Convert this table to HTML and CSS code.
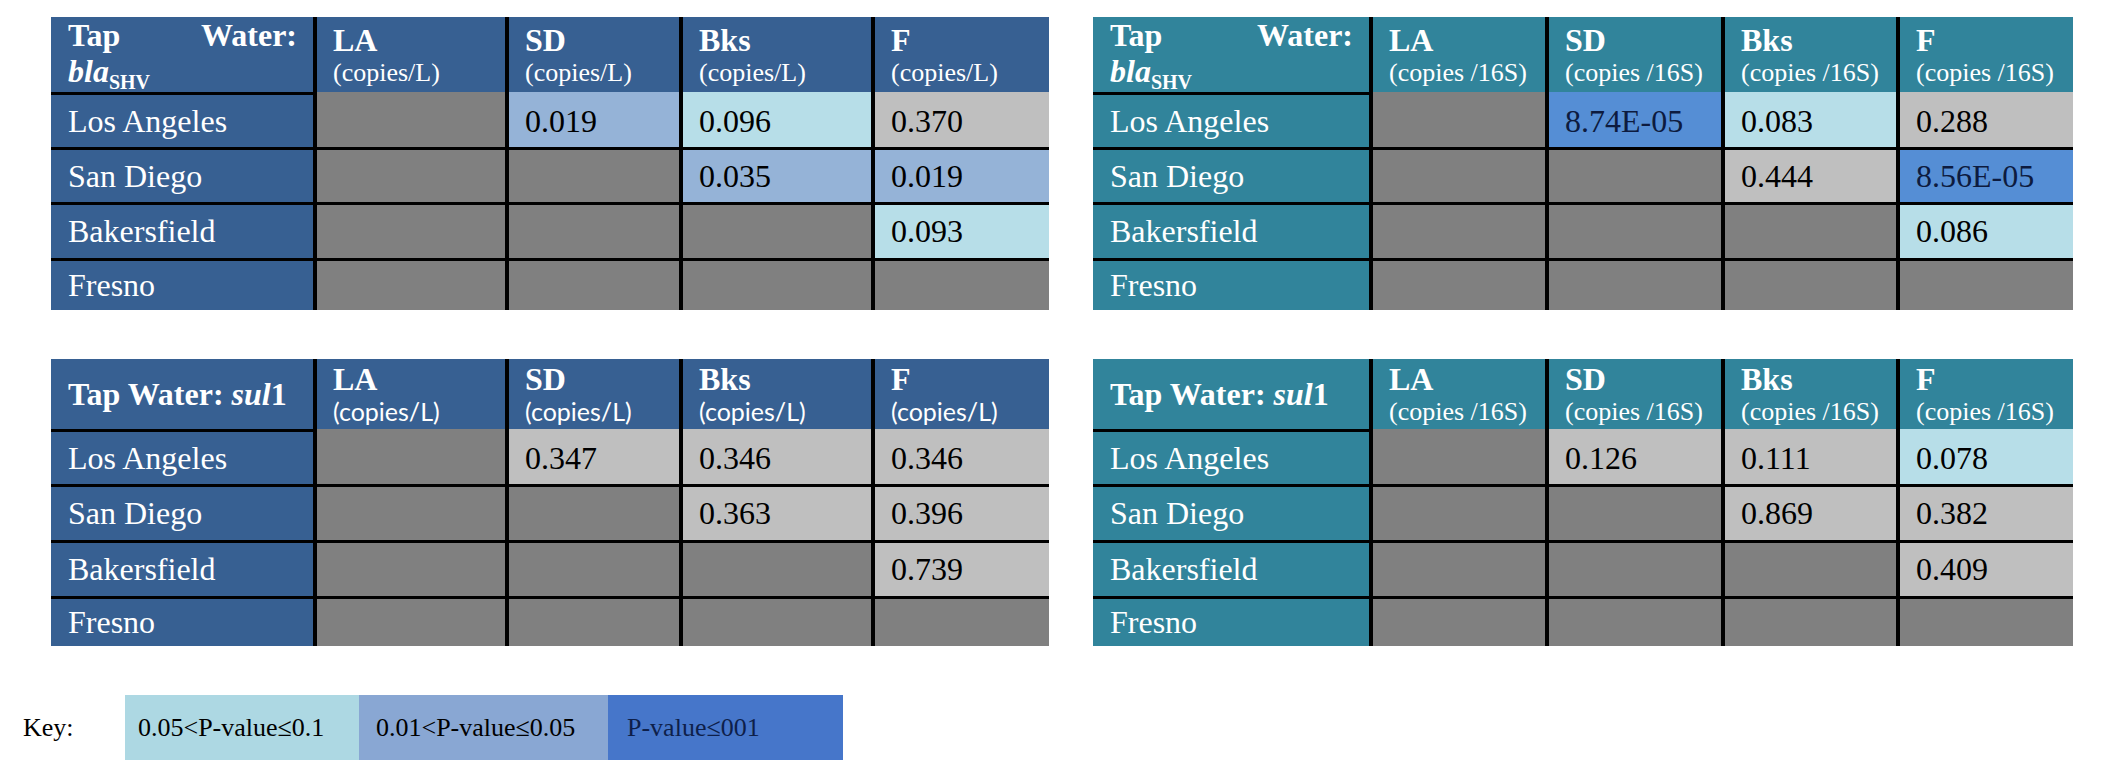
FILE: index.html
```html
<!DOCTYPE html>
<html lang="en">
<head>
<meta charset="utf-8">
<title>Tap water P-value tables</title>
<link rel="stylesheet" href="styles.css">
</head>
<body>
<div class="page">
  <div class="tables">
    <!-- top left -->
    <div class="tbl blue top cols-l">
      <div class="c h first"><div class="hl"><span>Tap</span><span>Water:</span></div><div><i>bla</i><sub>SHV</sub></div></div>
      <div class="c h"><b>LA</b><span class="u">(copies/L)</span></div>
      <div class="c h"><b>SD</b><span class="u">(copies/L)</span></div>
      <div class="c h"><b>Bks</b><span class="u">(copies/L)</span></div>
      <div class="c h"><b>F</b><span class="u">(copies/L)</span></div>
      <div class="c lbl">Los Angeles</div>
      <div class="c d g"></div>
      <div class="c d mb">0.019</div>
      <div class="c d lb">0.096</div>
      <div class="c d lg">0.370</div>
      <div class="c lbl">San Diego</div>
      <div class="c d g"></div>
      <div class="c d g"></div>
      <div class="c d mb">0.035</div>
      <div class="c d mb">0.019</div>
      <div class="c lbl">Bakersfield</div>
      <div class="c d g"></div>
      <div class="c d g"></div>
      <div class="c d g"></div>
      <div class="c d lb">0.093</div>
      <div class="c lbl">Fresno</div>
      <div class="c d g"></div>
      <div class="c d g"></div>
      <div class="c d g"></div>
      <div class="c d g"></div>
    </div>
    <!-- top right -->
    <div class="tbl teal top cols-r">
      <div class="c h first"><div class="hl"><span>Tap</span><span>Water:</span></div><div><i>bla</i><sub>SHV</sub></div></div>
      <div class="c h"><b>LA</b><span class="u">(copies /16S)</span></div>
      <div class="c h"><b>SD</b><span class="u">(copies /16S)</span></div>
      <div class="c h"><b>Bks</b><span class="u">(copies /16S)</span></div>
      <div class="c h"><b>F</b><span class="u">(copies /16S)</span></div>
      <div class="c lbl">Los Angeles</div>
      <div class="c d g"></div>
      <div class="c d sb">8.74E-05</div>
      <div class="c d lb">0.083</div>
      <div class="c d lg">0.288</div>
      <div class="c lbl">San Diego</div>
      <div class="c d g"></div>
      <div class="c d g"></div>
      <div class="c d lg">0.444</div>
      <div class="c d sb">8.56E-05</div>
      <div class="c lbl">Bakersfield</div>
      <div class="c d g"></div>
      <div class="c d g"></div>
      <div class="c d g"></div>
      <div class="c d lb">0.086</div>
      <div class="c lbl">Fresno</div>
      <div class="c d g"></div>
      <div class="c d g"></div>
      <div class="c d g"></div>
      <div class="c d g"></div>
    </div>
    <!-- bottom left -->
    <div class="tbl blue bottom cols-l">
      <div class="c h first"><span>Tap Water: <i>sul</i>1</span></div>
      <div class="c h"><b>LA</b><span class="u sans">(copies/L)</span></div>
      <div class="c h"><b>SD</b><span class="u sans">(copies/L)</span></div>
      <div class="c h"><b>Bks</b><span class="u sans">(copies/L)</span></div>
      <div class="c h"><b>F</b><span class="u sans">(copies/L)</span></div>
      <div class="c lbl">Los Angeles</div>
      <div class="c d g"></div>
      <div class="c d lg">0.347</div>
      <div class="c d lg">0.346</div>
      <div class="c d lg">0.346</div>
      <div class="c lbl">San Diego</div>
      <div class="c d g"></div>
      <div class="c d g"></div>
      <div class="c d lg">0.363</div>
      <div class="c d lg">0.396</div>
      <div class="c lbl">Bakersfield</div>
      <div class="c d g"></div>
      <div class="c d g"></div>
      <div class="c d g"></div>
      <div class="c d lg">0.739</div>
      <div class="c lbl">Fresno</div>
      <div class="c d g"></div>
      <div class="c d g"></div>
      <div class="c d g"></div>
      <div class="c d g"></div>
    </div>
    <!-- bottom right -->
    <div class="tbl teal bottom cols-r">
      <div class="c h first"><span>Tap Water: <i>sul</i>1</span></div>
      <div class="c h"><b>LA</b><span class="u">(copies /16S)</span></div>
      <div class="c h"><b>SD</b><span class="u">(copies /16S)</span></div>
      <div class="c h"><b>Bks</b><span class="u">(copies /16S)</span></div>
      <div class="c h"><b>F</b><span class="u">(copies /16S)</span></div>
      <div class="c lbl">Los Angeles</div>
      <div class="c d g"></div>
      <div class="c d lg">0.126</div>
      <div class="c d lg">0.111</div>
      <div class="c d lb">0.078</div>
      <div class="c lbl">San Diego</div>
      <div class="c d g"></div>
      <div class="c d g"></div>
      <div class="c d lg">0.869</div>
      <div class="c d lg">0.382</div>
      <div class="c lbl">Bakersfield</div>
      <div class="c d g"></div>
      <div class="c d g"></div>
      <div class="c d g"></div>
      <div class="c d lg">0.409</div>
      <div class="c lbl">Fresno</div>
      <div class="c d g"></div>
      <div class="c d g"></div>
      <div class="c d g"></div>
      <div class="c d g"></div>
    </div>
  </div>
  <div class="key">
    <span class="key-label">Key:</span>
    <span class="kb kb1">0.05&lt;P-value≤0.1</span>
    <span class="kb kb2">0.01&lt;P-value≤0.05</span>
    <span class="kb kb3">P-value≤001</span>
  </div>
</div>
</body>
</html>
```
FILE: styles.css
```css
html, body {
  margin: 0;
  padding: 0;
  background: #ffffff;
}

.page {
  padding-top: 17px;
  font-family: "Liberation Serif", "Times New Roman", serif;
  color: #000;
}

.tables {
  display: grid;
  grid-template-columns: 998px 980px;
  column-gap: 44px;
  row-gap: 49px;
  margin-left: 51px;
  align-items: start;
}

.tbl {
  display: grid;
}

.tbl.top {
  grid-template-rows: 75px 58px 55px 56px 49px;
}

.tbl.bottom {
  grid-template-rows: 70px 58px 56px 56px 47px;
}

.cols-l {
  grid-template-columns: 266px 192px 174px 192px 174px;
}

.cols-r {
  grid-template-columns: 280px 176px 176px 175px 173px;
}

.c {
  box-sizing: border-box;
  border-right: 4px solid #000;
  padding-left: 16px;
  font-size: 32px;
  min-width: 0;
  overflow: hidden;
}

.c:nth-child(5n) {
  border-right: 0;
}

/* horizontal lines between data rows */
.c:nth-child(n+6):nth-child(-n+20) {
  border-bottom: 3px solid #000;
}

/* line below the first header cell */
.c:nth-child(6) {
  border-top: 3px solid #000;
}

.c:nth-child(n+7):nth-child(-n+10) {
  padding-top: 3px;
}

.blue .h, .blue .lbl { background: #376092; }
.teal .h, .teal .lbl { background: #31849B; }

.h {
  color: #fff;
  display: flex;
  flex-direction: column;
}

.top .h { padding-top: 7px; }
.bottom .h { padding-top: 4px; }

.h b {
  display: block;
  font-weight: bold;
  line-height: 32px;
}

.h .u {
  display: block;
  font-size: 26px;
  line-height: 33px;
  white-space: nowrap;
}

.h .u.sans {
  font-family: Lato, "Liberation Sans", sans-serif;
  font-size: 25px;
}

.top .h.first {
  padding: 0 16px 0 17px;
  font-weight: bold;
  line-height: 36px;
}

.top .h.first .hl {
  display: flex;
  justify-content: space-between;
}

.h.first i {
  font-style: italic;
}

.h.first sub {
  font-size: 20px;
  line-height: 0;
  vertical-align: -7px;
  font-weight: bold;
}

.bottom .h.first {
  padding: 0 0 0 17px;
  justify-content: center;
  font-weight: bold;
  line-height: 36px;
}

.lbl {
  color: #fff;
  display: flex;
  align-items: center;
  padding-left: 17px;
}

.d {
  display: flex;
  align-items: center;
}

.g  { background: #808080; }
.lg { background: #BFBFBF; }
.lb { background: #B7DEE8; }
.mb { background: #95B3D7; }
.sb { background: #558ED5; color: #0d1b3f; }

.key {
  display: flex;
  align-items: center;
  margin-top: 49px;
  padding-left: 23px;
  font-size: 26px;
}

.key-label {
  width: 102px;
}

.kb {
  box-sizing: border-box;
  height: 65px;
  display: flex;
  align-items: center;
}

.kb1 { width: 234px; background: #ADD8E3; padding-left: 13px; }
.kb2 { width: 249px; background: #89A7D3; padding-left: 17px; }
.kb3 { width: 235px; background: #4676CA; padding-left: 19px; color: #0e1f4a; }
```
